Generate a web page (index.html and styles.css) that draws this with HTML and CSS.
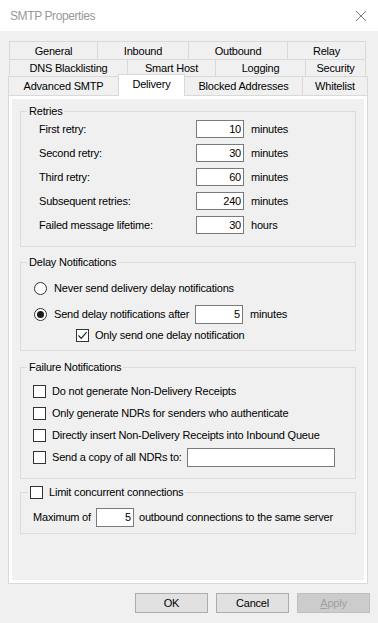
FILE: index.html
```html
<!DOCTYPE html>
<html>
<head>
<meta charset="utf-8">
<link rel="stylesheet" href="styles.css">
</head>
<body>
<div class="window">
  <div class="titlebar">
    <span class="title">SMTP Properties</span>
    <svg class="close" width="12" height="12" viewBox="0 0 12 12"><path d="M1 1 L11 11 M11 1 L1 11" stroke="#7a7a7a" stroke-width="1" fill="none"/></svg>
  </div>

  <div class="tabs">
    <div class="tabrow r1">
      <div class="tab">General</div>
      <div class="tab">Inbound</div>
      <div class="tab">Outbound</div>
      <div class="tab last">Relay</div>
    </div>
    <div class="tabrow r2">
      <div class="tab">DNS Blacklisting</div>
      <div class="tab">Smart Host</div>
      <div class="tab">Logging</div>
      <div class="tab last">Security</div>
    </div>
    <div class="tabrow r3">
      <div class="tab">Advanced SMTP</div>
      <div class="tab sel">Delivery</div>
      <div class="tab">Blocked Addresses</div>
      <div class="tab last">Whitelist</div>
    </div>
  </div>

  <div class="panel">
    <fieldset class="group retries">
      <legend>Retries</legend>
      <div class="rgrid">
        <span>First retry:</span><input class="tb" type="text" value="10"><span class="unit">minutes</span>
        <span>Second retry:</span><input class="tb" type="text" value="30"><span class="unit">minutes</span>
        <span>Third retry:</span><input class="tb" type="text" value="60"><span class="unit">minutes</span>
        <span>Subsequent retries:</span><input class="tb" type="text" value="240"><span class="unit">minutes</span>
        <span>Failed message lifetime:</span><input class="tb" type="text" value="30"><span class="unit">hours</span>
      </div>
    </fieldset>

    <fieldset class="group delay">
      <legend>Delay Notifications</legend>
      <div class="drow1 opt"><span class="radio"></span><span>Never send delivery delay notifications</span></div>
      <div class="drow2">
        <div class="opt"><span class="radio on"></span><span>Send delay notifications after</span></div>
        <input class="tb" type="text" value="5"><span class="unit">minutes</span>
      </div>
      <div class="drow3 opt"><span class="check"><svg width="11" height="11" viewBox="0 0 11 11"><path d="M1.5 5.5 L4.2 8.3 L9.6 2.2" stroke="#222" stroke-width="1.2" fill="none"/></svg></span><span>Only send one delay notification</span></div>
    </fieldset>

    <fieldset class="group failure">
      <legend>Failure Notifications</legend>
      <div class="frow opt"><span class="check"></span><span>Do not generate Non-Delivery Receipts</span></div>
      <div class="frow opt"><span class="check"></span><span>Only generate NDRs for senders who authenticate</span></div>
      <div class="frow opt"><span class="check"></span><span>Directly insert Non-Delivery Receipts into Inbound Queue</span></div>
      <div class="frow opt"><span class="check"></span><span>Send a copy of all NDRs to:</span><input class="tb wide" type="text" value=""></div>
    </fieldset>

    <fieldset class="group limit">
      <legend class="opt"><span class="check"></span><span>Limit concurrent connections</span></legend>
      <div class="lrow">
        <span>Maximum of</span><input class="tb small" type="text" value="5"><span class="unit2">outbound connections to the same server</span>
      </div>
    </fieldset>
  </div>

  <div class="buttons">
    <button class="btn">OK</button>
    <button class="btn">Cancel</button>
    <button class="btn disabled"><u>A</u>pply</button>
  </div>
</div>
</body>
</html>
```

FILE: styles.css
```css
html, body {
  margin: 0;
  padding: 0;
}
body {
  width: 378px;
  height: 623px;
  background: #f0f0f0;
  font-family: "Liberation Sans", Arial, sans-serif;
  font-size: 11px;
  letter-spacing: -0.2px;
  color: #000;
  overflow: hidden;
}
.window {
  width: 378px;
  height: 623px;
}
.titlebar {
  height: 31px;
  background: #fff;
  display: flex;
  align-items: center;
  justify-content: space-between;
  padding: 0 11px 0 10px;
  box-sizing: border-box;
}
.title {
  font-size: 12px;
  color: #999;
  letter-spacing: -0.4px;
}
.close {
  display: block;
}

/* tabs */
.tabs {
  margin-top: 10px;
}
.tabrow {
  display: grid;
}
.r1 {
  height: 18px;
  margin: 0 12px 0 9px;
  grid-template-columns: 88px 91px 99px 1fr;
}
.r2 {
  height: 17px;
  margin: 0 12px 0 9px;
  grid-template-columns: 118px 88px 90px 1fr;
}
.r3 {
  height: 19px;
  margin: 0 10px 0 8px;
  grid-template-columns: 110px 67px 117px 1fr;
}
.tab {
  border-top: 1px solid #d9d9d9;
  border-left: 1px solid #d9d9d9;
  background: #f0f0f0;
  display: flex;
  align-items: center;
  justify-content: center;
  white-space: nowrap;
}
.tab.last {
  border-right: 1px solid #d9d9d9;
}
.tab.sel {
  background: #fff;
  border-right: 1px solid #d9d9d9;
  margin-top: -2px;
  margin-bottom: -1px;
  padding-bottom: 4px;
  position: relative;
  z-index: 1;
}
.tab.sel + .tab {
  border-left: none;
}

/* panel */
.panel {
  height: 489px;
  box-sizing: border-box;
  margin: 0 10px 0 8px;
  border: 1px solid #d9d9d9;
  background: #f0f0f0;
  box-shadow: inset 0 0 0 3px #fff;
  padding: 8px 11px 0;
}
.group {
  margin: 0;
  border: 1px solid #dcdcdc;
  min-width: 0;
  padding-left: 0;
  padding-right: 0;
}
.group legend {
  margin-left: 6px;
  padding: 0 2px;
  line-height: 14px;
  height: 14px;
}
.retries {
  padding-top: 0;
  padding-bottom: 10px;
}
.rgrid {
  display: grid;
  grid-template-columns: 157px 48px auto;
  grid-auto-rows: 22px;
  row-gap: 2px;
  align-items: center;
  padding-left: 18px;
}
.unit {
  padding-left: 7px;
}
.tb {
  font: inherit;
  letter-spacing: inherit;
  color: #000;
  width: 48px;
  height: 18px;
  box-sizing: border-box;
  border: 1px solid #7a7a7a;
  background: #fff;
  text-align: right;
  padding: 0 2px;
  margin: 0;
  outline: none;
}
.opt {
  display: flex;
  align-items: center;
}
.radio {
  width: 13px;
  height: 13px;
  box-sizing: border-box;
  border: 1px solid #333;
  border-radius: 50%;
  background: #fff;
  margin-right: 7px;
  display: flex;
  align-items: center;
  justify-content: center;
  flex: none;
}
.radio.on::after {
  content: "";
  width: 7px;
  height: 7px;
  border-radius: 50%;
  background: #1a1a1a;
}
.check {
  width: 13px;
  height: 13px;
  box-sizing: border-box;
  border: 1px solid #333;
  background: #fff;
  margin-right: 6px;
  display: flex;
  align-items: center;
  justify-content: center;
  flex: none;
}
.check svg {
  display: block;
}
.delay {
  margin-top: 8px;
  padding-top: 8px;
  padding-bottom: 5px;
}
.drow1 {
  height: 22px;
  margin-bottom: 4px;
  padding-left: 13px;
}
.drow2 {
  display: grid;
  grid-template-columns: 161px 48px auto;
  height: 22px;
  align-items: center;
  padding-left: 13px;
}
.drow2 .tb {
  height: 19px;
}
.drow3 {
  height: 20px;
  padding-left: 55px;
}
.failure {
  margin-top: 9px;
  padding-top: 6px;
  padding-bottom: 10px;
}
.frow {
  height: 22px;
  padding-left: 12px;
  padding-right: 20px;
}
.tb.wide {
  width: 148px;
  height: 19px;
  margin-left: auto;
}
.limit {
  margin-top: 6px;
  padding-top: 7px;
  padding-bottom: 5px;
}
.limit legend {
  margin-left: 7px;
}
.lrow {
  display: grid;
  grid-template-columns: 63px 38px auto;
  height: 22px;
  align-items: center;
  padding-left: 12px;
}
.tb.small {
  width: 38px;
  height: 19px;
}
.unit2 {
  padding-left: 5px;
  white-space: nowrap;
}

/* buttons */
.buttons {
  margin-top: 9px;
  display: flex;
  justify-content: flex-end;
  gap: 8px;
  padding-right: 8px;
}
.btn {
  width: 73px;
  height: 20px;
  box-sizing: border-box;
  border: 1px solid #adadad;
  background: #e1e1e1;
  font: inherit;
  letter-spacing: inherit;
  color: #000;
  padding: 0;
  margin: 0;
}
.btn.disabled {
  background: #cccccc;
  border-color: #bfbfbf;
  color: #a0a0a0;
}
```
